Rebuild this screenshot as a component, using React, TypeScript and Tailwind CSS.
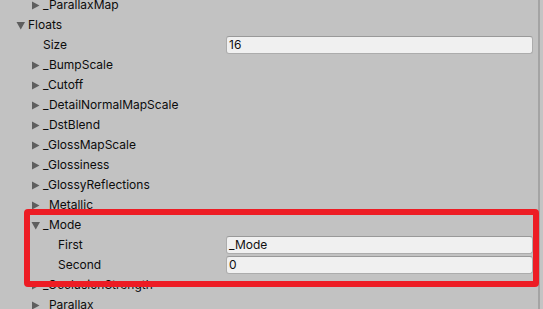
import React from "react";

type Row = {
  label: string;
  level: number;
  arrow?: "right" | "down";
  value?: string;
};

const rows: Row[] = [
  { label: "_ParallaxMap", level: 2, arrow: "right" },
  { label: "Floats", level: 1, arrow: "down" },
  { label: "Size", level: 2, value: "16" },
  { label: "_BumpScale", level: 2, arrow: "right" },
  { label: "_Cutoff", level: 2, arrow: "right" },
  { label: "_DetailNormalMapScale", level: 2, arrow: "right" },
  { label: "_DstBlend", level: 2, arrow: "right" },
  { label: "_GlossMapScale", level: 2, arrow: "right" },
  { label: "_Glossiness", level: 2, arrow: "right" },
  { label: "_GlossyReflections", level: 2, arrow: "right" },
  { label: "_Metallic", level: 2, arrow: "right" },
  { label: "_Mode", level: 2, arrow: "down" },
  { label: "First", level: 3, value: "_Mode" },
  { label: "Second", level: 3, value: "0" },
  { label: "_OcclusionStrength", level: 2, arrow: "right" },
  { label: "_Parallax", level: 2, arrow: "right" },
];

function Arrow({ dir }: { dir: "right" | "down" }) {
  return (
    <svg width="11" height="11" viewBox="0 0 11 11" className="shrink-0">
      {dir === "right" ? (
        <path d="M1 1.5 L8.5 5.5 L1 9.5 Z" fill="#5e5e5e" />
      ) : (
        <path d="M0.5 2 L9 2 L4.75 9.5 Z" fill="#5e5e5e" />
      )}
    </svg>
  );
}

function InspectorRow({ row }: { row: Row }) {
  const indent = row.level === 1 ? "pl-[16px]" : row.level === 2 ? "pl-[31px]" : "pl-[46px]";
  return (
    <div className="flex h-[20px] items-center">
      <div className={`flex w-[226px] shrink-0 items-center ${indent}`}>
        <div className="w-[12px] shrink-0">{row.arrow && <Arrow dir={row.arrow} />}</div>
        <span className="whitespace-nowrap">{row.label}</span>
      </div>
      {row.value !== undefined && (
        <div className="flex h-[18px] w-[307px] items-center rounded-[3px] border border-[#acacac] border-t-[#999999] bg-[#f0f0f0] pl-[2px] text-[12px] text-[#101010]">
          {row.value}
        </div>
      )}
    </div>
  );
}

export default function App() {
  return (
    <div
      className="relative flex h-[309px] w-[543px] overflow-hidden bg-[#c2c2c2] text-[12px] text-[#0c0c0c]"
      style={{ fontFamily: "Inter, 'Noto Sans', sans-serif" }}
    >
      <div className="flex-1">
        <div className="-mt-[5px] flex flex-col">
          {rows.map((r) => (
            <InspectorRow key={r.label} row={r} />
          ))}
        </div>
      </div>
      <div className="w-[5px] shrink-0 border-l-2 border-[#a4a4a4] bg-[#c4c4c4]" />

      {/* annotation highlight */}
      <div className="pointer-events-none absolute left-[24px] top-[209px] h-[78px] w-[515px] rounded-[4px] border-[6px] border-[#ed1c24]" />
    </div>
  );
}
